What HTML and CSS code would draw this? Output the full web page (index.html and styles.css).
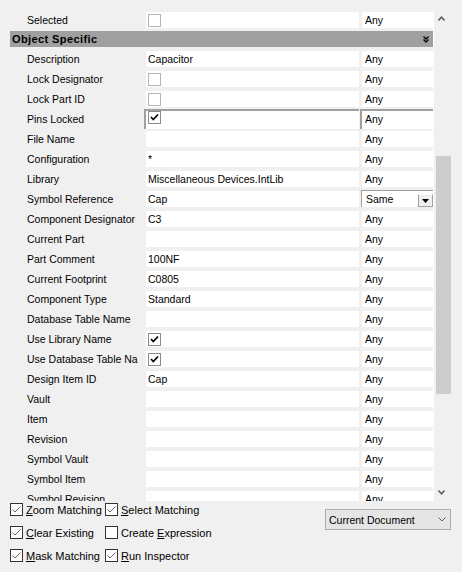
FILE: index.html
```html
<!DOCTYPE html>
<html>
<head>
<meta charset="utf-8">
<link rel="stylesheet" href="styles.css">
</head>
<body>
<div class="panel">
  <div class="control">
    <div class="grid">
      <div class="row"><div class="label">Selected</div><div class="val"><span class="chk"></span></div><div class="any">Any</div></div>
      <div class="hdr"><div class="bar"><span>Object Specific</span><svg class="dbl" width="6" height="7" viewBox="0 0 6 7"><path d="M0.5 0.5 L3 3 L5.5 0.5 M0.5 3.5 L3 6 L5.5 3.5" fill="none" stroke="#000" stroke-width="1.3"/></svg></div></div>
      <div class="row"><div class="label">Description</div><div class="val">Capacitor</div><div class="any">Any</div></div>
      <div class="row"><div class="label">Lock Designator</div><div class="val"><span class="chk"></span></div><div class="any">Any</div></div>
      <div class="row"><div class="label">Lock Part ID</div><div class="val"><span class="chk"></span></div><div class="any">Any</div></div>
      <div class="row edit"><div class="label">Pins Locked</div><div class="val"><span class="chk on"><svg width="11" height="11" viewBox="0 0 11 11"><path d="M2 5 L4.3 7.5 L9 2.5" fill="none" stroke="#000" stroke-width="1.7"/></svg></span></div><div class="any">Any</div></div>
      <div class="row"><div class="label">File Name</div><div class="val"></div><div class="any">Any</div></div>
      <div class="row"><div class="label">Configuration</div><div class="val">*</div><div class="any">Any</div></div>
      <div class="row"><div class="label">Library</div><div class="val">Miscellaneous Devices.IntLib</div><div class="any">Any</div></div>
      <div class="row"><div class="label">Symbol Reference</div><div class="val">Cap</div><div class="combo"><span class="combo-text">Same</span><span class="combo-btn"><svg width="7" height="4" viewBox="0 0 7 4"><path d="M0 0 H7 L3.5 4 Z" fill="#000"/></svg></span></div></div>
      <div class="row"><div class="label">Component Designator</div><div class="val">C3</div><div class="any">Any</div></div>
      <div class="row"><div class="label">Current Part</div><div class="val"></div><div class="any">Any</div></div>
      <div class="row"><div class="label">Part Comment</div><div class="val">100NF</div><div class="any">Any</div></div>
      <div class="row"><div class="label">Current Footprint</div><div class="val">C0805</div><div class="any">Any</div></div>
      <div class="row"><div class="label">Component Type</div><div class="val">Standard</div><div class="any">Any</div></div>
      <div class="row"><div class="label">Database Table Name</div><div class="val"></div><div class="any">Any</div></div>
      <div class="row"><div class="label">Use Library Name</div><div class="val"><span class="chk on"><svg width="11" height="11" viewBox="0 0 11 11"><path d="M2 5 L4.3 7.5 L9 2.5" fill="none" stroke="#000" stroke-width="1.7"/></svg></span></div><div class="any">Any</div></div>
      <div class="row"><div class="label">Use Database Table Na</div><div class="val"><span class="chk on"><svg width="11" height="11" viewBox="0 0 11 11"><path d="M2 5 L4.3 7.5 L9 2.5" fill="none" stroke="#000" stroke-width="1.7"/></svg></span></div><div class="any">Any</div></div>
      <div class="row"><div class="label">Design Item ID</div><div class="val">Cap</div><div class="any">Any</div></div>
      <div class="row"><div class="label">Vault</div><div class="val"></div><div class="any">Any</div></div>
      <div class="row"><div class="label">Item</div><div class="val"></div><div class="any">Any</div></div>
      <div class="row"><div class="label">Revision</div><div class="val"></div><div class="any">Any</div></div>
      <div class="row"><div class="label">Symbol Vault</div><div class="val"></div><div class="any">Any</div></div>
      <div class="row"><div class="label">Symbol Item</div><div class="val"></div><div class="any">Any</div></div>
      <div class="row"><div class="label">Symbol Revision</div><div class="val"></div><div class="any">Any</div></div>
    </div>
    <div class="vscroll">
      <div class="sb-btn"><svg width="7" height="5" viewBox="0 0 7 5"><path d="M0.5 4.5 L3.5 1.2 L6.5 4.5" fill="none" stroke="#606060" stroke-width="1.6"/></svg></div>
      <div class="track"><div class="thumb"></div></div>
      <div class="sb-btn"><svg width="7" height="5" viewBox="0 0 7 5"><path d="M0.5 0.5 L3.5 3.8 L6.5 0.5" fill="none" stroke="#606060" stroke-width="1.6"/></svg></div>
    </div>
  </div>
  <div class="footer">
    <div class="checks">
      <label class="cb"><span class="box"><svg width="11" height="11" viewBox="0 0 11 11"><path d="M1.5 5.5 L4 8 L9.5 2.5" fill="none" stroke="#666" stroke-width="1"/></svg></span><span><u>Z</u>oom Matching</span></label>
      <label class="cb"><span class="box"><svg width="11" height="11" viewBox="0 0 11 11"><path d="M1.5 5.5 L4 8 L9.5 2.5" fill="none" stroke="#666" stroke-width="1"/></svg></span><span><u>S</u>elect Matching</span></label>
      <label class="cb"><span class="box"><svg width="11" height="11" viewBox="0 0 11 11"><path d="M1.5 5.5 L4 8 L9.5 2.5" fill="none" stroke="#666" stroke-width="1"/></svg></span><span><u>C</u>lear Existing</span></label>
      <label class="cb"><span class="box"></span><span>Create <u>E</u>xpression</span></label>
      <label class="cb"><span class="box"><svg width="11" height="11" viewBox="0 0 11 11"><path d="M1.5 5.5 L4 8 L9.5 2.5" fill="none" stroke="#666" stroke-width="1"/></svg></span><span><u>M</u>ask Matching</span></label>
      <label class="cb"><span class="box"><svg width="11" height="11" viewBox="0 0 11 11"><path d="M1.5 5.5 L4 8 L9.5 2.5" fill="none" stroke="#666" stroke-width="1"/></svg></span><span><u>R</u>un Inspector</span></label>
    </div>
    <div class="dropdown"><span>Current Document</span><svg width="8" height="5" viewBox="0 0 8 5"><path d="M0.5 0.5 L4 4 L7.5 0.5" fill="none" stroke="#606060" stroke-width="1"/></svg></div>
  </div>
</div>
</body>
</html>
```
FILE: styles.css
```css
html, body {
  margin: 0;
  padding: 0;
}
body {
  background: #f0f0f0;
  font-family: "Liberation Sans", Arial, sans-serif;
  font-size: 10.5px;
  color: #000;
  width: 462px;
  height: 572px;
  overflow: hidden;
}
.panel {
  padding-top: 10px;
}
.control {
  display: flex;
  height: 491px;
}
.grid {
  width: 423px;
  margin-left: 10px;
  border-right: 1px solid #fff;
  height: 491px;
  overflow: hidden;
}
.row {
  display: grid;
  grid-template-columns: 136px 213px 74px;
  height: 20px;
  align-items: center;
}
.label {
  padding-left: 17px;
  white-space: nowrap;
  overflow: hidden;
  line-height: 20px;
}
.val, .any {
  background: #fff;
  height: 16px;
  line-height: 16px;
  padding-left: 2px;
  white-space: nowrap;
  overflow: hidden;
  box-sizing: border-box;
  display: flex;
  align-items: center;
}
.any {
  margin-left: 3px;
  padding-left: 3px;
}
.chk {
  width: 13px;
  height: 13px;
  box-sizing: border-box;
  border: 1px solid #b4b4b4;
  background: #fff;
  display: flex;
  align-items: center;
  justify-content: center;
}
.chk.on {
  border-color: #8a8a8a;
}
.row.edit .val,
.row.edit .any {
  align-self: stretch;
  height: 20px;
  border-top: 2px solid #a0a0a0;
  border-left: 2px solid #a0a0a0;
  align-items: flex-start;
}
.row.edit .val {
  margin-left: -2px;
}
.row.edit .any {
  margin-left: 1px;
  margin-right: -1px;
  line-height: 17px;
}
.hdr {
  height: 18px;
}
.bar {
  margin-top: 1px;
  height: 16px;
  background: #a0a0a0;
  font-weight: bold;
  font-size: 11px;
  letter-spacing: 0.4px;
  padding: 0 4px 0 2px;
  line-height: 16px;
  display: flex;
  justify-content: space-between;
  align-items: center;
}
.combo {
  align-self: start;
  margin-top: 1px;
  margin-left: 2px;
  height: 17px;
  box-sizing: border-box;
  border-top: 1px solid #a0a0a0;
  border-left: 1px solid #a0a0a0;
  background: #fff;
  display: flex;
  align-items: flex-start;
}
.combo-text {
  padding-left: 4px;
  line-height: 16px;
}
.combo-btn {
  margin-left: auto;
  margin-top: 3px;
  width: 15px;
  height: 13px;
  box-sizing: border-box;
  background: #f0f0f0;
  border-left: 1px solid #a0a0a0;
  border-top: 1px solid #fff;
  border-bottom: 1px solid #a0a0a0;
  border-right: 1px solid #a0a0a0;
  display: flex;
  align-items: center;
  justify-content: center;
}
.vscroll {
  width: 18px;
  display: flex;
  flex-direction: column;
}
.sb-btn {
  height: 17px;
  display: flex;
  align-items: center;
  justify-content: center;
  padding-right: 3px;
}
.track {
  flex: 1;
}
.thumb {
  margin-top: 129px;
  margin-left: 2px;
  width: 15px;
  height: 238px;
  background: #cdcdcd;
}
.footer {
  display: flex;
  padding-top: 2px;
  padding-left: 10px;
}
.checks {
  display: grid;
  grid-template-columns: 95px auto;
  row-gap: 10px;
}
.cb {
  display: flex;
  align-items: center;
  height: 13px;
  gap: 3px;
  white-space: nowrap;
  font-size: 11px;
}
.box {
  width: 13px;
  height: 13px;
  box-sizing: border-box;
  border: 1px solid #333;
  background: #fff;
  display: flex;
  align-items: center;
  justify-content: center;
}
.dropdown {
  margin-left: auto;
  margin-right: 11px;
  margin-top: 6px;
  width: 126px;
  height: 21px;
  box-sizing: border-box;
  border: 1px solid #adadad;
  background: #e5e5e5;
  display: flex;
  align-items: center;
  justify-content: space-between;
  padding: 0 4px 0 3px;
}
```
